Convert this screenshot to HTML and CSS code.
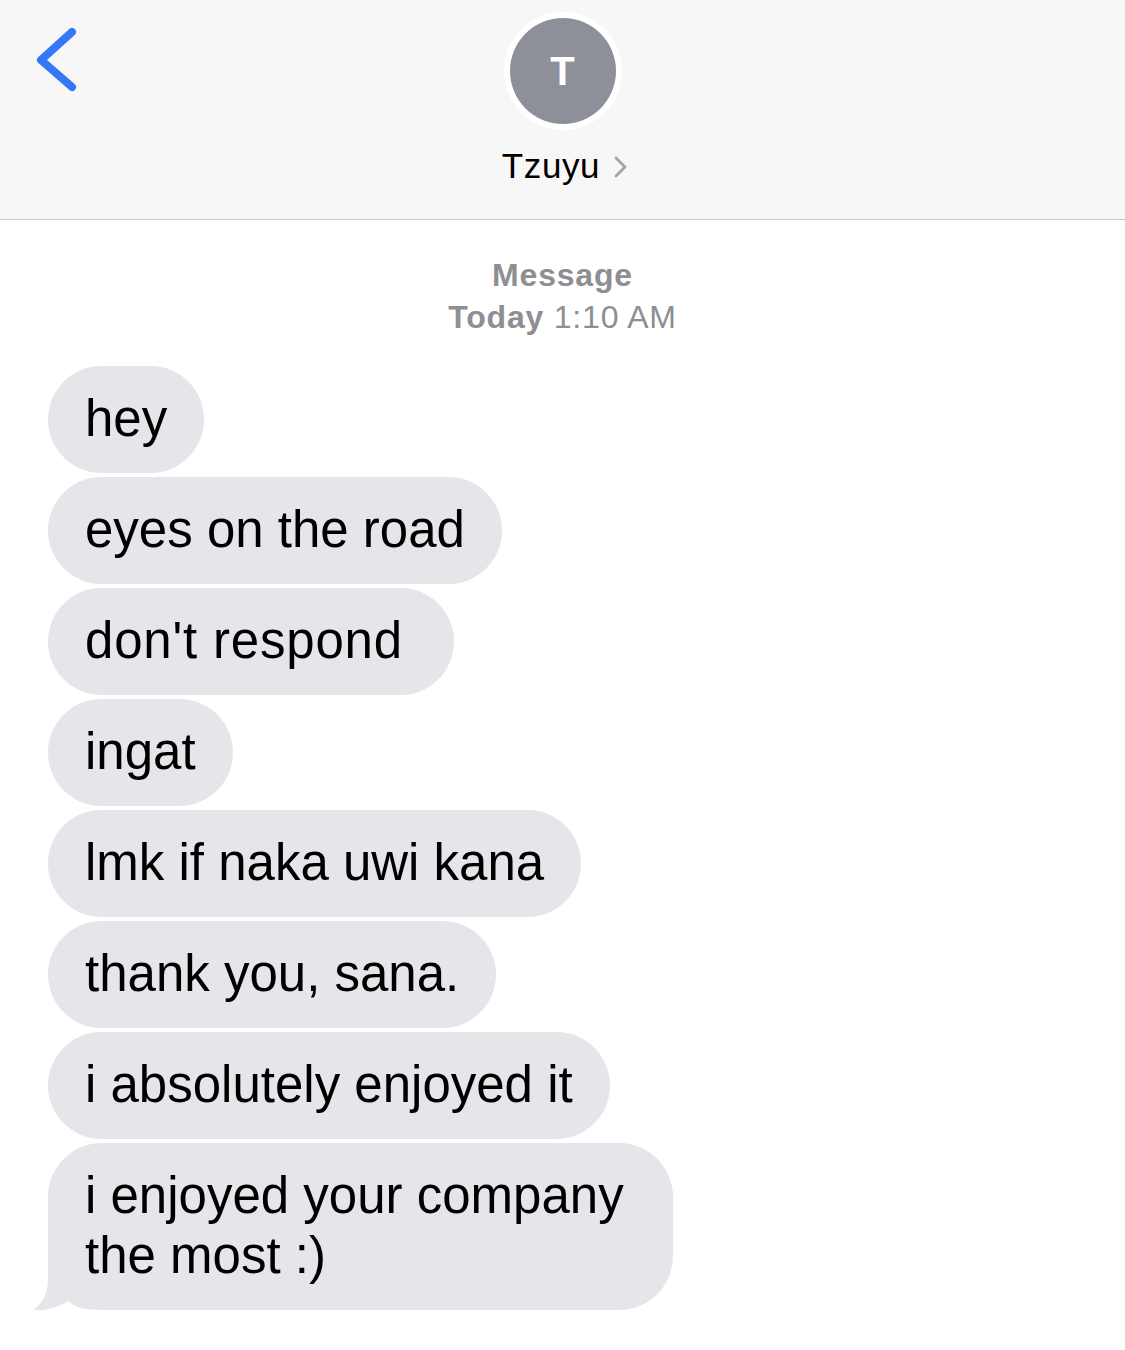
FILE: index.html
```html
<!DOCTYPE html>
<html>
<head>
<meta charset="utf-8">
<link rel="stylesheet" href="styles.css">
</head>
<body>
<header class="nav">
  <svg class="back" width="44" height="66" viewBox="0 0 44 66">
    <polyline points="37,6 6,34 37,61" fill="none" stroke="#3478f6" stroke-width="8" stroke-linecap="round" stroke-linejoin="round"/>
  </svg>
  <div class="avatar-ring"><div class="avatar">T</div></div>
  <div class="name">Tzuyu<svg class="name-chev" width="16" height="24" viewBox="0 0 16 24"><polyline points="3,3 12,12 3,21" fill="none" stroke="#a3a3a8" stroke-width="2.8" stroke-linecap="round" stroke-linejoin="round"/></svg></div>
</header>
<section class="meta">
  <div class="meta-title">Message</div>
  <div class="meta-time"><b>Today</b> 1:10 AM</div>
</section>
<main class="thread">
  <div class="bubble">hey</div>
  <div class="bubble">eyes on the road</div>
  <div class="bubble wide">don't respond</div>
  <div class="bubble">ingat</div>
  <div class="bubble">lmk if naka uwi kana</div>
  <div class="bubble">thank you, sana.</div>
  <div class="bubble">i absolutely enjoyed it</div>
  <div class="bubble last">i enjoyed your company the most :)
    <svg class="tail" width="70" height="60" viewBox="0 0 70 60"><path d="M15,0 L15,30 C15,45 8,55 0,60 C14,61 26,57 35,51 C42,57 50,60 70,60 L70,0 Z" fill="#e5e5ea"/></svg>
  </div>
</main>
</body>
</html>
```

FILE: styles.css
```css
* { box-sizing: border-box; }
html, body { margin: 0; padding: 0; }
html { background: #ffffff; }
body {
  font-family: "Liberation Sans", Arial, sans-serif;
  color: #000;
  width: 1125px;
  height: 1350px;
  overflow: hidden;
}
.nav {
  position: relative;
  background: #f7f7f7;
  border-bottom: 1px solid #c8c8cc;
  height: 220px;
  padding-top: 12px;
  display: flex;
  flex-direction: column;
  align-items: center;
}
.back {
  position: absolute;
  left: 35px;
  top: 26px;
}
.avatar-ring {
  width: 118px;
  height: 118px;
  border-radius: 50%;
  background: #ffffff;
  padding: 6px;
}
.avatar {
  width: 106px;
  height: 106px;
  border-radius: 50%;
  background: #8e9099;
  color: #fff;
  font-weight: bold;
  font-size: 40px;
  display: flex;
  align-items: center;
  justify-content: center;
}
.name {
  margin-top: 16px;
  font-size: 35px;
  line-height: 40px;
  letter-spacing: 0.6px;
  display: flex;
  align-items: center;
  gap: 13px;
  padding-left: 6px;
}
.name-chev { margin-top: 2px; }
.meta {
  padding-top: 34px;
  text-align: center;
  color: #8e8e93;
  font-size: 32px;
  line-height: 42px;
  letter-spacing: 0.8px;
}
.meta-title { font-weight: bold; }
.meta-time b { font-weight: bold; }
.thread {
  margin-top: 28px;
  padding-left: 48px;
  display: flex;
  flex-direction: column;
  align-items: flex-start;
  gap: 4px;
}
.bubble {
  position: relative;
  z-index: 0;
  background: #e5e5ea;
  border-radius: 54px;
  font-size: 51px;
  line-height: 60px;
  padding: 23px 37px 24px 37px;
  max-width: 625px;
}
.bubble.wide {
  letter-spacing: 0.8px;
  padding-right: 51px;
}
.bubble.last { width: 625px; }
.tail {
  position: absolute;
  left: -15px;
  bottom: 0;
  z-index: -1;
}
```
